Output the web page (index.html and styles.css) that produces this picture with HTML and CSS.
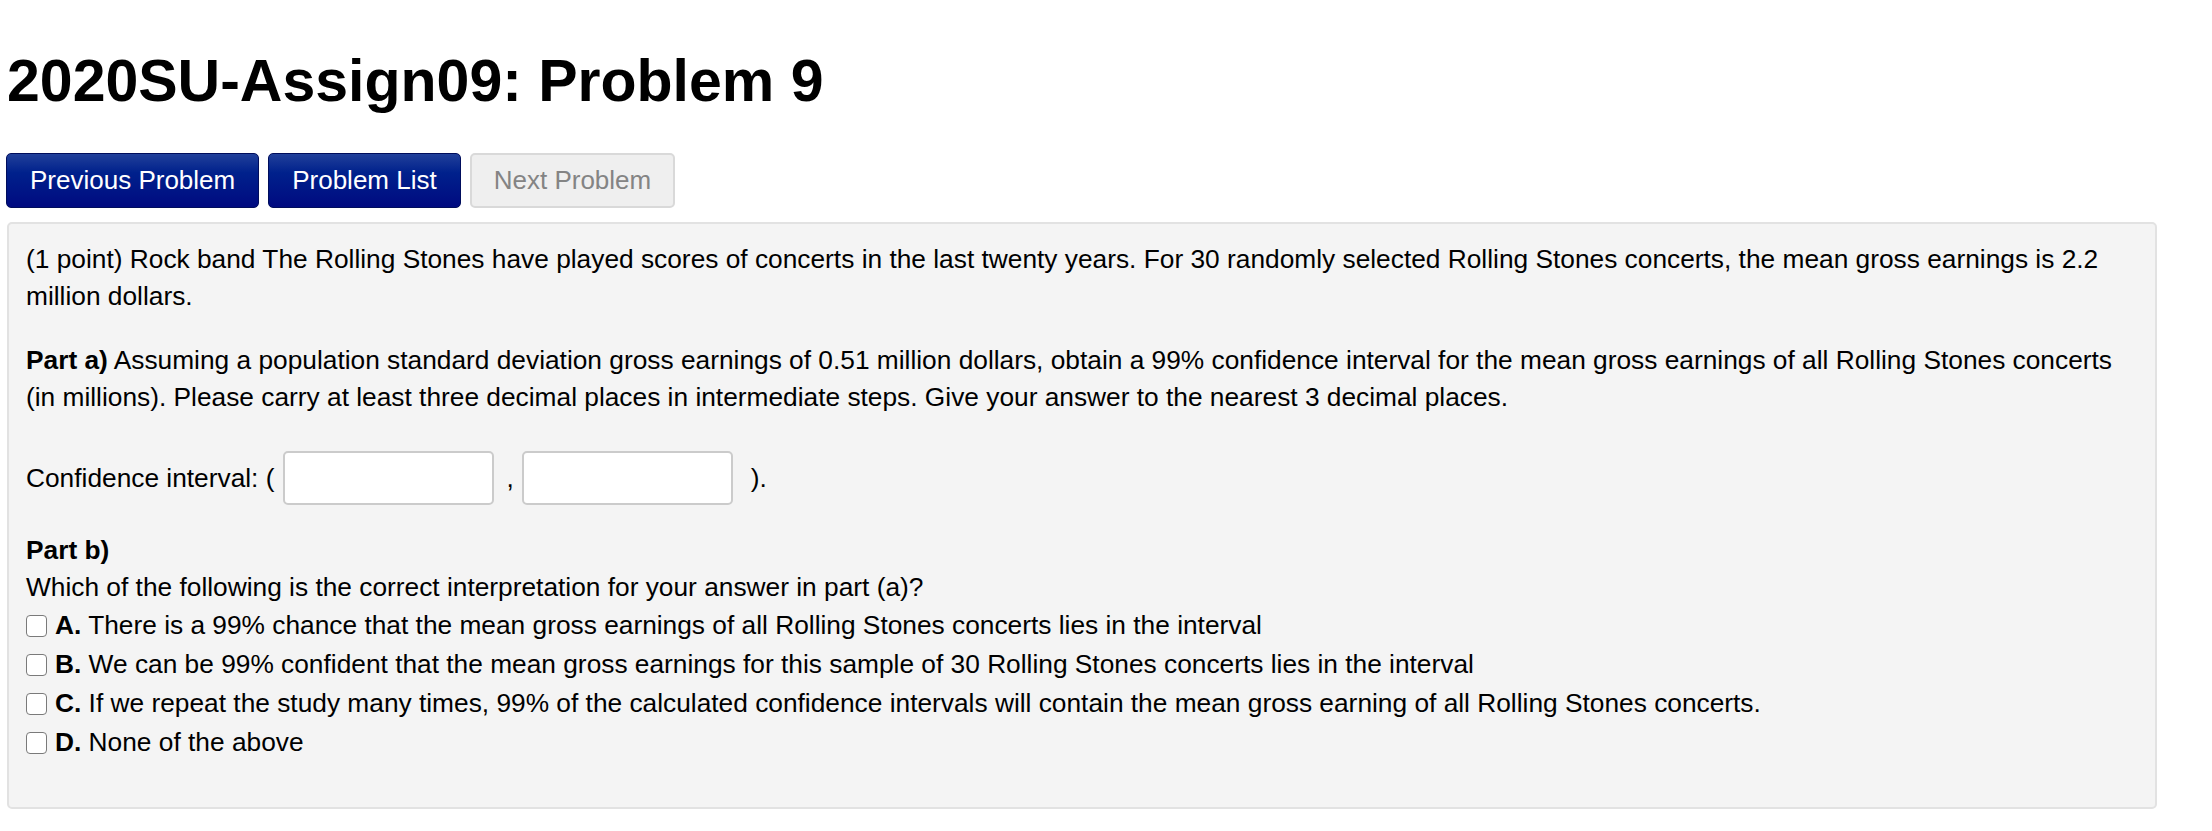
FILE: index.html
```html
<html lang="en">
<head>
    <meta charset="UTF-8">
    <meta name="viewport" content="width=device-width, initial-scale=1.0">
    <title>2020SU-Assign09: Problem 9</title>
    <link rel="stylesheet" href="styles.css">
</head>
<body>
    <h1>2020SU-Assign09: Problem 9</h1>

    <div class="nav-buttons">
        <a class="nav-btn" href="#">Previous Problem</a>
        <a class="nav-btn" href="#">Problem List</a>
        <span class="nav-btn disabled">Next Problem</span>
    </div>

    <div class="problem">
        <p>(1 point) Rock band The Rolling Stones have played scores of concerts in the last twenty years. For 30 randomly selected Rolling Stones concerts, the mean gross earnings is 2.2 million dollars.</p>

        <p><b>Part a)</b> Assuming a population standard deviation gross earnings of 0.51 million dollars, obtain a 99% confidence interval for the mean gross earnings of all Rolling Stones concerts (in millions). Please carry at least three decimal places in intermediate steps. Give your answer to the nearest 3 decimal places.</p>

        <div class="interval">
            <span>Confidence interval: (</span>
            <input type="text" class="answer" id="AnSwEr0001">
            <span class="comma">,</span>
            <input type="text" class="answer" id="AnSwEr0002">
            <span class="close">).</span>
        </div>

        <div class="part-b">
            <b>Part b)</b>
            <div>Which of the following is the correct interpretation for your answer in part (a)?</div>
            <label class="choice"><input type="checkbox" name="AnSwEr0003" value="A"><span><b>A.</b> There is a 99% chance that the mean gross earnings of all Rolling Stones concerts lies in the interval</span></label>
            <label class="choice"><input type="checkbox" name="AnSwEr0003" value="B"><span><b>B.</b> We can be 99% confident that the mean gross earnings for this sample of 30 Rolling Stones concerts lies in the interval</span></label>
            <label class="choice"><input type="checkbox" name="AnSwEr0003" value="C"><span><b>C.</b> If we repeat the study many times, 99% of the calculated confidence intervals will contain the mean gross earning of all Rolling Stones concerts.</span></label>
            <label class="choice"><input type="checkbox" name="AnSwEr0003" value="D"><span><b>D.</b> None of the above</span></label>
        </div>
    </div>
</body>
</html>
```

FILE: styles.css
```css
body {
    font-family: "Liberation Sans", Arial, sans-serif;
    margin: 0;
    padding: 0 6px;
    color: #000;
    background: #fff;
}
h1 {
    font-size: 59px;
    font-weight: bold;
    line-height: 68px;
    margin: 47px 0 0 1px;
}
.nav-buttons {
    display: flex;
    gap: 9px;
    margin-top: 38px;
}
.nav-btn {
    display: flex;
    align-items: center;
    box-sizing: border-box;
    height: 55px;
    padding: 0 23px;
    font-size: 26px;
    color: #fff;
    text-decoration: none;
    border: 1px solid #000d5c;
    border-radius: 5px;
    background: linear-gradient(to bottom, #21409a 0%, #00218c 35%, #000a80 100%);
}
.nav-btn.disabled {
    color: #848484;
    background: #efefef;
    border: 2px solid #d9d9d9;
    padding: 0 22px;
}
.problem {
    box-sizing: border-box;
    width: 2150px;
    margin: 14px 0 0 1px;
    padding: 17px 8px 45px 17px;
    background: #f4f4f4;
    border: 2px solid #e2e2e2;
    border-radius: 5px;
    font-size: 26.3px;
    line-height: 37px;
}
.problem p {
    margin: 0 0 27px;
}
.interval {
    display: flex;
    align-items: center;
    margin-top: 35px;
}
.answer {
    box-sizing: border-box;
    width: 211px;
    height: 54px;
    margin: 0 0 0 8px;
    border: 2px solid #cbcbcb;
    border-radius: 5px;
    background: #fff;
    font-size: 26px;
}
.comma {
    margin: 0 0 0 13px;
}
.close {
    margin-left: 18px;
}
.part-b {
    margin-top: 27px;
}
.choice {
    display: flex;
    align-items: center;
    height: 39px;
}
.choice input {
    appearance: none;
    box-sizing: border-box;
    width: 21px;
    height: 22px;
    margin: 0 8px 0 0;
    border: 1px solid #7a7a7a;
    border-radius: 4px;
    background: #fff;
}
```
